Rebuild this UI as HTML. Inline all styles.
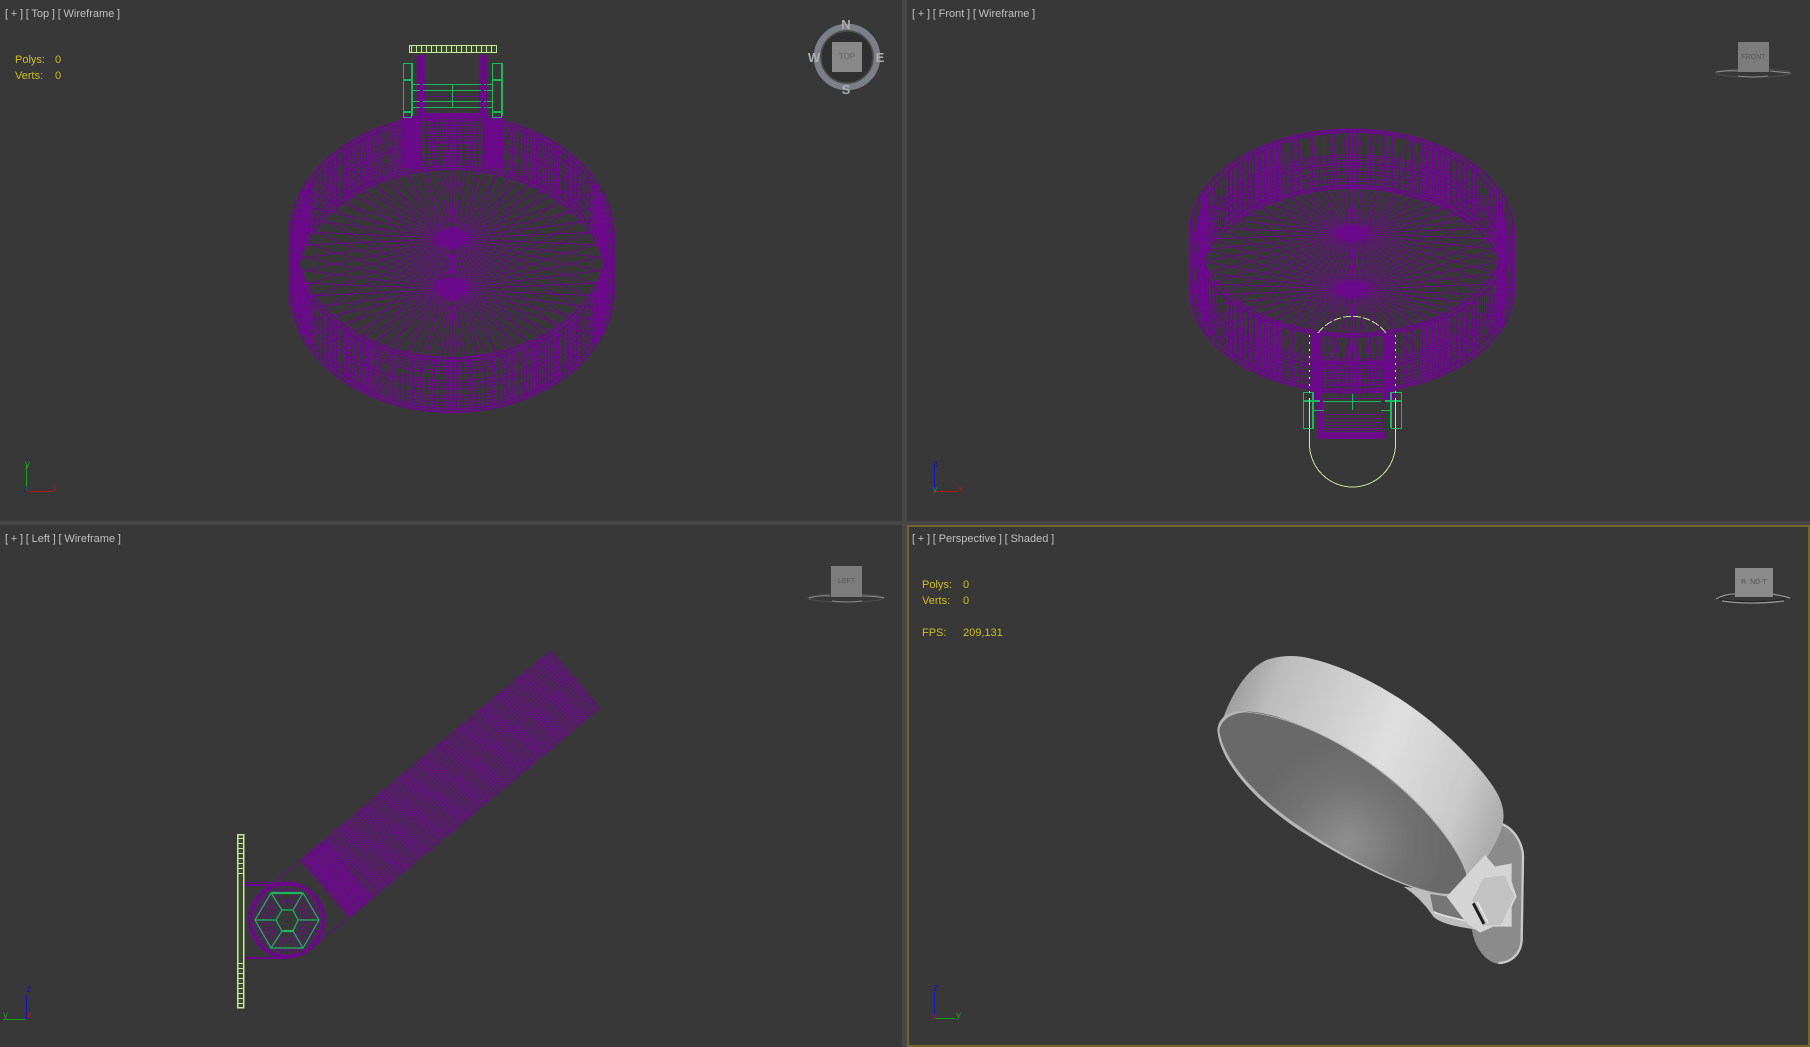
<!DOCTYPE html>
<html>
<head>
<meta charset="utf-8">
<title>Viewports</title>
<style>
html,body{margin:0;padding:0;width:1810px;height:1047px;overflow:hidden;background:#474747}
body{position:relative;font-family:"Liberation Sans",sans-serif}
.vp{position:absolute;background:#383838}
.t{position:absolute;font-size:11px;line-height:14px;white-space:pre;color:#c0c0c0;word-spacing:-.3px}
.y{color:#cdbf1e;word-spacing:0}
svg{position:absolute;left:0;top:0}
.cube{position:absolute;background:#7c7c7c;color:#565656;font-size:7px;line-height:1;display:flex;align-items:center;justify-content:center;letter-spacing:0}
</style>
</head>
<body>
<div class="vp" style="left:0;top:0;width:902px;height:521px"></div>
<div class="vp" style="left:907px;top:0;width:903px;height:521px"></div>
<div class="vp" style="left:0;top:525px;width:902px;height:522px"></div>
<div class="vp" style="left:907px;top:525px;width:903px;height:522px"></div>
<div style="position:absolute;left:907px;top:525px;width:899px;height:518px;border:2px solid #75642c"></div>

<svg width="1810" height="1047" viewBox="0 0 1810 1047" xmlns="http://www.w3.org/2000/svg">
  <defs>
    <linearGradient id="wall" gradientUnits="userSpaceOnUse" x1="90" y1="200" x2="900" y2="520">
      <stop offset="0" stop-color="#a0a0a0"/><stop offset=".12" stop-color="#bcbcbc"/>
      <stop offset=".55" stop-color="#dfdfdf"/><stop offset=".85" stop-color="#cacaca"/><stop offset="1" stop-color="#aeaeae"/>
    </linearGradient>
    <radialGradient id="inn" gradientUnits="userSpaceOnUse" cx="440" cy="610" r="300">
      <stop offset="0" stop-color="#8f8f8f"/><stop offset=".6" stop-color="#737373"/><stop offset="1" stop-color="#696969"/>
    </radialGradient>
  </defs>

  <g id="fb" fill="#6a0a8a">
    <path fill-rule="evenodd" d="M290 238A162 123 0 0 1 614 238V289A162 123 0 0 1 290 289ZM298 262A157 120 0 0 1 605 262A157 120 0 0 1 298 262Z"/>
    <path fill-rule="evenodd" d="M1190 233A162 103 0 0 1 1514 233V289A162 103 0 0 1 1190 289ZM1203 261A155 101 0 0 1 1501 261A155 101 0 0 1 1203 261Z"/>
    <path d="M552 649L600 708L346 920L300 860Z"/>
  </g>
  <path id="pur" fill="none" stroke="#6a0a8a" stroke-width="1" shape-rendering="crispEdges" d=""/>
  <path id="pur2" fill="none" stroke="#6a0a8a" stroke-width="2" shape-rendering="crispEdges" d=""/>
  <g fill="#6a0a8a">
    <rect x="401" y="116" width="21" height="52"/><rect x="483" y="116" width="20" height="52"/>
    <rect x="418" y="113" width="69" height="5"/>
    <ellipse cx="452" cy="238" rx="17" ry="9"/><ellipse cx="452" cy="286" rx="17" ry="9"/>
    <ellipse cx="1352" cy="233" rx="17" ry="8"/><ellipse cx="1352" cy="289" rx="17" ry="8"/>
    <rect x="1311" y="335" width="11" height="66"/><rect x="1383" y="335" width="12" height="66"/>
    <rect x="1322" y="361" width="62" height="4"/><rect x="1318" y="432" width="67" height="7"/>
  </g>

  <!-- Top: green + yellow -->
  <g fill="none" stroke="#1db85e" shape-rendering="crispEdges">
    <rect x="403.500" y="63.500" width="8" height="54"/><rect x="492.500" y="63.500" width="9" height="54"/>
    <path d="M412 84.500H492M412 90.500H492M412 101.500H492M412 107.500H492M452.500 84V107"/>
    <path stroke-width="2" d="M403 80H412M403 112H412M492 80H502M492 112H502M412 63V116M502 63V116"/>
  </g>
  <g fill="#6a0a8a">
    <rect x="418" y="55" width="7" height="60"/><rect x="479" y="55" width="8" height="60"/>
  </g>
  <path fill="none" stroke="#383838" stroke-dasharray="2 5" shape-rendering="crispEdges" d="M421.500 56V112M482.500 56V112"/>
  <path fill="none" stroke="#1db85e" stroke-dasharray="2 3" shape-rendering="crispEdges" d="M418 84.500H425M418 90.500H425M418 101.500H425M418 107.500H425M479 84.500H487M479 90.500H487M479 101.500H487M479 107.500H487"/>
  <rect x="409.500" y="45.500" width="87" height="7" fill="#394a2e" stroke="#c9e79c" shape-rendering="crispEdges"/>
  <path id="tick1" fill="none" stroke="#c9e79c" shape-rendering="crispEdges" d=""/>

  <!-- Front: yellow + green -->
  <g fill="none" stroke="#1db85e" shape-rendering="crispEdges">
    <rect x="1303.500" y="392.500" width="10" height="36"/><rect x="1391.500" y="392.500" width="10" height="36"/>
    <path stroke-width="2" d="M1303 401H1320M1385 401H1401M1313 392V428M1391 392V428"/>
    <path d="M1323 401.500H1381M1313 410.500H1324M1381 410.500H1391M1352.500 394V410"/>
  </g>
  <g fill="none" stroke="#c9e79c" shape-rendering="crispEdges">
    <path d="M1309.500 400V444A43 43 0 0 0 1395.500 444V400"/>
    <path stroke-dasharray="8 2" d="M1318 333A43 43 0 0 1 1386 333"/>
    <path stroke="#dfeecb" stroke-dasharray="2 5" d="M1309.500 335V400M1395.500 335V400"/>
  </g>

  <!-- Left: yellow + hex -->
  <rect x="237.500" y="834.500" width="6" height="173" fill="#394a2e" stroke="#c9e79c" stroke-width="1.500" shape-rendering="crispEdges"/>
  <path id="tick2" fill="none" stroke="#c9e79c" shape-rendering="crispEdges" d=""/>
  <g fill="none" stroke="#1db85e" stroke-width="1.200">
    <path d="M255 920L271 893H303L319 920L303 948H271Z"/>
    <path d="M276 920L282 910H293L298 920L293 931H282Z"/>
    <path d="M255 920H276M298 920H319M271 893L282 910M303 893L293 910M271 948L282 931M303 948L293 931"/>
    <path stroke-width="2.200" d="M272 893H302M283 931H293"/>
  </g>

  <!-- Axis gizmos -->
  <g stroke-width="1.200" shape-rendering="crispEdges" fill="none">
    <path stroke="#15a015" d="M26.500 464V491"/><path stroke="#b01818" d="M27 491.500H52"/>
    <path stroke="#1515c8" d="M934.500 464V491"/><path stroke="#b01818" d="M935 491.500H958"/>
    <path stroke="#1515c8" d="M26.500 995V1019"/><path stroke="#15a015" d="M3 1019.500H26"/>
    <path stroke="#1515c8" d="M934.500 992V1018"/><path stroke="#15a015" d="M935 1018.500H955"/>
  </g>
  <g font-family="'Liberation Sans',sans-serif" font-size="10">
    <text x="25" y="467" fill="#15a015">y</text><text x="52" y="492" fill="#b01818">x</text><text x="24" y="492" fill="#1515c8" font-size="8">z</text>
    <text x="933" y="467" fill="#1515c8">z</text><text x="958" y="492" fill="#b01818">x</text><text x="933" y="492" fill="#15a015" font-size="8">y</text>
    <text x="26" y="992" fill="#1515c8">z</text><text x="3" y="1018" fill="#15a015">y</text><text x="27" y="1018" fill="#b01818">x</text>
    <text x="933" y="991" fill="#1515c8">z</text><text x="956" y="1018" fill="#15a015">y</text><text x="932" y="1019" fill="#b01818" font-size="8">x</text>
  </g>

  <!-- Compass -->
  <circle cx="847" cy="57" r="31" fill="#2f2f2f"/>
  <circle cx="847" cy="57" r="30" fill="none" stroke="#7b8088" stroke-width="6.500"/>
  <circle cx="847" cy="57" r="26" fill="none" stroke="#4b4b4b" stroke-width="1.500"/>
  <g font-family="'Liberation Sans',sans-serif" font-size="13" font-weight="bold" fill="#adadad" text-anchor="middle">
    <text x="846" y="29">N</text><text x="880" y="62">E</text><text x="846" y="94">S</text><text x="814" y="62">W</text>
  </g>

  <!-- Nav rings -->
  <g fill="none">
    <ellipse cx="1753" cy="73" rx="38" ry="4" stroke="#4c4c4c" stroke-width="1.200"/>
    <path d="M1716 72Q1730 70 1738 71M1770 71Q1780 72 1790 73M1738 76Q1753 78 1768 76" stroke="#8c8c8c" stroke-width="1.100"/>
    <ellipse cx="846" cy="598" rx="38" ry="4" stroke="#4c4c4c" stroke-width="1.200"/>
    <path d="M809 598Q820 595 830 596M862 596Q875 596 884 598M832 601Q846 603 862 601" stroke="#8c8c8c" stroke-width="1.100"/>
    <ellipse cx="1752" cy="598" rx="33" ry="4" stroke="#262626" stroke-width="2"/>
    <path d="M1716 599Q1724 594 1736 594M1770 594Q1780 595 1790 598M1722 601Q1750 605 1784 601" stroke="#989898" stroke-width="1.300"/>
  </g>

  <!-- Perspective object -->
  <g transform="translate(1200 640) scale(.33333)">
    <path d="M905 552C950 570 972 620 972 650L968 900C965 950 930 972 895 972C850 965 818 910 815 860L815 700Z" fill="#8b8b8b"/>
    <path d="M905 552C950 570 969 620 969 650L965 900C962 945 930 969 895 969" fill="none" stroke="#c8c8c8" stroke-width="7"/>
    <path d="M610 740C650 765 680 800 700 830C720 850 770 860 810 866L850 872L770 760Z" fill="#bdbdbd"/>
    <path d="M690 762L745 770L805 835L800 842C770 832 730 830 700 812Z" fill="#767676"/>
    <path d="M702 816C730 830 770 834 806 845" fill="none" stroke="#e0e0e0" stroke-width="5"/>
    <path d="M52 270L72 228C95 165 140 85 200 60C240 45 290 45 330 55C500 95 700 220 850 400C890 450 915 490 910 540C905 590 850 680 800 725L700 540C600 420 300 210 130 215C90 215 60 235 52 270Z" fill="url(#wall)"/>
    <path d="M52 270C55 230 90 212 135 214C260 225 420 295 560 405C680 500 790 630 808 722C800 760 770 770 730 765C620 755 420 650 290 565C170 485 60 370 52 270Z" fill="#b6b6b6"/>
    <path d="M58 272C62 240 95 218 138 217C262 228 420 298 558 408C678 503 785 632 804 720C800 755 770 763 730 761C620 750 430 650 300 560C180 480 72 370 58 272Z" fill="url(#inn)"/>
    <path d="M740 770L855 645L885 680L935 670L935 725L950 770L935 800L935 860L880 860L840 878L800 850Z" fill="#d4d4d4"/>
    <path d="M815 780L850 712L915 705L945 770L905 855L850 860Z" fill="#c2c2c2" stroke="#dadada" stroke-width="2"/>
    <path d="M832 786L864 848" stroke="#e6e6e6" stroke-width="5"/>
    <path d="M820 790L852 852" stroke="#1e1e1e" stroke-width="9"/>
  </g>
</svg>

<div class="cube" style="left:832px;top:42px;width:30px;height:30px;background:#888;color:#626262;font-size:8px">TOP</div>
<div class="cube" style="left:1738px;top:42px;width:31px;height:30px">FRONT</div>
<div class="cube" style="left:831px;top:566px;width:31px;height:31px">LEFT</div>
<div class="cube" style="left:1735px;top:568px;width:38px;height:29px;background:#8a8a8a;font-size:7px">R&nbsp;&nbsp;ND-T</div>

<div class="t" style="left:5px;top:7px">[ + ] [ Top ] [ Wireframe ]</div>
<div class="t" style="left:912px;top:7px">[ + ] [ Front ] [ Wireframe ]</div>
<div class="t" style="left:5px;top:532px">[ + ] [ Left ] [ Wireframe ]</div>
<div class="t" style="left:912px;top:532px">[ + ] [ Perspective ] [ Shaded ]</div>

<div class="t y" style="left:15px;top:53px">Polys:</div><div class="t y" style="left:55px;top:53px">0</div>
<div class="t y" style="left:15px;top:69px">Verts:</div><div class="t y" style="left:55px;top:69px">0</div>
<div class="t y" style="left:922px;top:578px">Polys:</div><div class="t y" style="left:963px;top:578px">0</div>
<div class="t y" style="left:922px;top:594px">Verts:</div><div class="t y" style="left:963px;top:594px">0</div>
<div class="t y" style="left:922px;top:626px">FPS:</div><div class="t y" style="left:963px;top:626px">209,131</div>

<script>
(function(){
  var d=[],d2=[],r=function(v){return Math.round(v)+.5};
  function L(a,b,c,e,o){(o||d).push('M'+r(a)+' '+r(b)+'L'+r(c)+' '+r(e))}
  function ring(cx,cy,rx,ry,o){var s=[],n=160;for(var i=0;i<=n;i++){var t=i/n*2*Math.PI;s.push((i?'L':'M')+(cx+rx*Math.cos(t)).toFixed(1)+' '+(cy+ry*Math.sin(t)).toFixed(1))}(o||d).push(s.join(''))}
  function cyl(cx,yA,yB,rO,sO,rI,sI,fs){
    var i,t;
    for(i=0;i<140;i++){t=i/140*2*Math.PI+.0224;
      L(cx+rO*Math.cos(t),yA+sO*Math.sin(t),cx+rO*Math.cos(t),yB+sO*Math.sin(t));
      if(Math.abs(Math.cos(t))>.45)L(cx+rI*Math.cos(t),yA+sI*Math.sin(t),cx+rI*Math.cos(t),yB+sI*Math.sin(t));
    }
    fs.forEach(function(f){ring(cx,yA+f*(yB-yA),rO,sO);ring(cx,yA+f*(yB-yA),rI,sI)});
    ring(cx,yA,rO,sO,d2);ring(cx,yB,rO,sO,d2);ring(cx,yA,rI,sI,d2);ring(cx,yB,rI,sI,d2);
    for(i=0;i<56;i++){t=(i+.5)/56*2*Math.PI;
      L(cx,yA,cx+rI*Math.cos(t),yA+sI*Math.sin(t));
      L(cx,yB,cx+rI*Math.cos(t),yB+sI*Math.sin(t));
    }
    L(cx,yA-sI,cx,yB+sI);
  }
  cyl(452,238,289,162,123,157,120,[0,.12,.25,.45,.55,.75,.88,1]);
  cyl(1352,233,289,162,103.5,155,101,[0,.45,.55,.62,.75,.88,1]);

  var i,y,x;
  [96,120,125,133,136,142,150].forEach(function(v){L(425,v,480,v)});
  for(x=425;x<481;x+=8)L(x,118,x,165);

  /* front ladder purple */
  for(x=1318;x<=1322;x+=2){L(x,400,x,438)}
  for(x=1383;x<=1387;x+=2){L(x,400,x,438)}
  [368,372,378,384,392,398,414,418,422,425,428,430].forEach(function(v){L(1322,v,1384,v)});
  for(x=1322;x<1384;x+=9)L(x,362,x,395);
  [1325,1336,1348,1356,1368,1379].forEach(function(v){L(v,335,v+(v<1352?4:-4),361)});

  /* left band */
  var P=[287,920],u=[.767,-.641],n=[.641,.767],W=38,Len=376.5;
  function pt(s,o){return[P[0]+u[0]*s+n[0]*o,P[1]+u[1]*s+n[1]*o]}
  var o,s,a,b;
  for(o=-W;o<=W;o+=3){a=pt(Math.abs(o)>=36?0:48,o);b=pt(Len,o);L(a[0],a[1],b[0],b[1])}
  for(s=50;s<=Len;s+=2.9){a=pt(s,-W);b=pt(s,W);L(a[0],a[1],b[0],b[1])}
  for(s=50;s<=80;s+=1.4){a=pt(s,-W);b=pt(s,W);L(a[0],a[1],b[0],b[1])}
  [35,36,37,38].forEach(function(v){ring(P[0],P[1],v,v)});ring(P[0],P[1],30,30);
  for(i=0;i<36;i++){var t=i/36*2*Math.PI;L(P[0]+14*Math.cos(t),P[1]+14*Math.sin(t),P[0]+37*Math.cos(t),P[1]+37*Math.sin(t))}
  [882,884,885].forEach(function(v){L(244,v,288,v)});[957,958].forEach(function(v){L(244,v,288,v)});

  document.getElementById('pur').setAttribute('d',d.join(''));
  document.getElementById('pur2').setAttribute('d',d2.join(''));
  var fb=document.getElementById('fb');fb.parentNode.removeChild(fb);

  var t1=[];for(x=411;x<496;x+=5)t1.push('M'+(x+.5)+' 46V52');
  document.getElementById('tick1').setAttribute('d',t1.join(''));
  var t2=[];
  for(y=838;y<878;y+=5)t2.push('M238 '+(y+.5)+'H243');
  for(y=963;y<1008;y+=5)t2.push('M238 '+(y+.5)+'H243');
  document.getElementById('tick2').setAttribute('d',t2.join(''));
})();
</script>
</body>
</html>
